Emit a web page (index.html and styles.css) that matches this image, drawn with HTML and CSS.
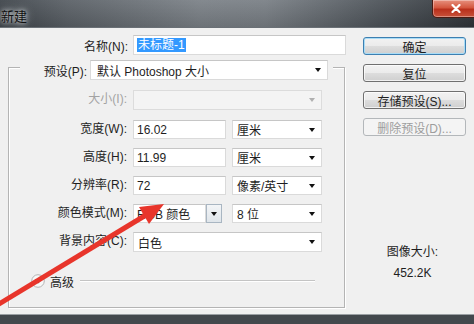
FILE: index.html
```html
<!DOCTYPE html>
<html lang="zh-CN">
<head>
<meta charset="UTF-8">
<title>新建</title>
<link rel="stylesheet" href="styles.css">
</head>
<body>
<div class="window">
  <div class="titlebar">
    <span class="title">新建</span>
    <span class="close">
      <svg width="10" height="9" viewBox="0 0 10 9"><path d="M1.5 1 L8.5 8 M8.5 1 L1.5 8" stroke="#fff" stroke-width="2.2" stroke-linecap="round"/></svg>
    </span>
  </div>

  <div class="client">
    <div class="form">
      <div class="name-row">
        <label>名称(N):</label>
        <div class="field"><span class="sel">未标题-1</span></div>
      </div>

      <div class="frame">
        <div class="preset-row">
          <label>预设(P):</label>
          <div class="field drop preset">默认 Photoshop 大小<i class="arrow"></i></div>
        </div>

        <div class="grid">
          <label class="off">大小(I):</label>
          <div class="field drop wide off"><i class="arrow"></i></div>

          <label>宽度(W):</label>
          <div class="field">16.02</div>
          <div class="field drop">厘米<i class="arrow"></i></div>

          <label>高度(H):</label>
          <div class="field">11.99</div>
          <div class="field drop">厘米<i class="arrow"></i></div>

          <label>分辨率(R):</label>
          <div class="field">72</div>
          <div class="field drop">像素/英寸<i class="arrow"></i></div>

          <label>颜色模式(M):</label>
          <div class="combo">
            <div class="field">RGB 颜色</div>
            <div class="combo-btn"><i class="arrow"></i></div>
          </div>
          <div class="field drop">8 位<i class="arrow"></i></div>

          <label>背景内容(C):</label>
          <div class="field drop wide">白色<i class="arrow"></i></div>
        </div>

        <div class="advanced">
          <svg width="14" height="14" viewBox="0 0 14 14">
            <circle cx="7" cy="7" r="6.3" fill="#f7f7f7" stroke="#b4b4b4"/>
            <path d="M4.2 5.6 L7 8.4 L9.8 5.6" fill="none" stroke="#222" stroke-width="1.6"/>
          </svg>
          <span class="adv-text">高级</span>
          <span class="groove"></span>
        </div>
      </div>
    </div>

    <div class="side">
      <div class="btn default">确定</div>
      <div class="btn">复位</div>
      <div class="btn">存储预设(S)...</div>
      <div class="btn off">删除预设(D)...</div>
      <div class="info">
        <div>图像大小:</div>
        <div class="size">452.2K</div>
      </div>
    </div>
  </div>

  <div class="bottom"></div>

  <!-- red annotation arrow drawn over the dialog -->
  <svg class="annot" width="474" height="324" viewBox="0 0 474 324">
    <line x1="-6" y1="307" x2="146" y2="215" stroke="#e8352b" stroke-width="5"/>
    <polygon points="164,204 149,224 139,207" fill="#e8352b"/>
  </svg>
</div>
</body>
</html>
```

FILE: styles.css
```css
body { margin:0; width:474px; height:324px; overflow:hidden; font-family:"Liberation Sans","Noto Sans CJK SC",sans-serif; font-size:12px; color:#1e1e1e; }
.window { position:relative; width:474px; height:324px; display:flex; flex-direction:column; background:#f0f0f0; }

.titlebar { height:27px; flex:none; display:flex; align-items:flex-start; border-bottom:1px solid #6a7076; background:linear-gradient(rgba(255,255,255,0.06),rgba(0,0,0,0.12)),linear-gradient(90deg,#3f454b 0%,#5b6167 14%,#7c8288 42%,#7a8086 56%,#4f555b 80%,#30353a 100%); }
.title { margin:6px 0 0 1px; font-size:13px; color:#111; text-shadow:0 0 4px #d8dcdf,0 0 8px #c9cdd1; }
.close { margin-left:auto; margin-right:-6px; width:48px; height:18px; box-sizing:border-box; display:flex; align-items:center; justify-content:center; border:1px solid #4a1a12; border-top:none; border-radius:0 0 0 5px; background:linear-gradient(#e7907e 0%,#d4573f 45%,#b9301c 55%,#c8523a 100%); box-shadow:inset 0 0 0 1px rgba(255,255,255,0.35); }

.client { height:286px; flex:none; box-sizing:border-box; display:flex; padding:7px 0 0 8px; }
.form { width:338px; }

label { text-align:right; white-space:nowrap; }
label.off { color:#a3a3a3; }

.field { height:19px; box-sizing:border-box; display:flex; align-items:center; padding-left:3px; background:#fff; border:1px solid #dadada; border-top-color:#c6c6c6; white-space:nowrap; }
.field.off { background:#f4f4f4; border-color:#dcdcdc; }
.drop { padding-left:4px; }
.arrow { margin-left:auto; margin-right:6px; width:0; height:0; border-left:3.5px solid transparent; border-right:3.5px solid transparent; border-top:4px solid #111; }
.off .arrow { border-top-color:#b0b0b0; }
.wide { grid-column:2 / 4; height:20px; }

.name-row { display:grid; grid-template-columns:120px 213px; column-gap:5px; align-items:center; height:20px; }
.name-row .field { height:20px; }
.sel { background:#3399ff; color:#fff; padding:0 1px; line-height:14px; }

.frame { margin-top:12px; width:337px; height:241px; box-sizing:border-box; border:1px solid #b4b4b4; box-shadow:1px 1px 0 #fff, inset 1px 1px 0 #fff; }

.preset-row { margin:-8px 0 0 11px; width:313px; height:20px; display:grid; grid-template-columns:67px 238px; column-gap:3px; align-items:center; background:#f0f0f0; }
.preset { height:20px; padding-left:6px; }

.grid { margin-top:10px; display:grid; grid-template-columns:118px 93px 90px; grid-template-rows:21px repeat(5,19px); column-gap:6px; row-gap:9px; align-items:start; }
.grid label { line-height:19px; }

.combo { display:flex; width:89px; }
.combo .field { flex:1; }
.combo-btn { width:16px; height:19px; box-sizing:border-box; display:flex; align-items:center; border:1px solid #a9b6c2; background:linear-gradient(#f3f5f7,#dfe5ea); }
.combo-btn .arrow { margin:0 auto; }

.advanced { margin:23px 0 0 22px; height:14px; display:flex; align-items:center; }
.adv-text { margin-left:5px; }
.groove { margin-left:6px; width:235px; height:0; border-top:1px solid #c4c4c4; border-bottom:1px solid #fff; }

.side { margin-left:17px; width:103px; display:flex; flex-direction:column; gap:9px; padding-top:2px; }
.btn { height:18px; box-sizing:border-box; display:flex; align-items:center; justify-content:center; border:1px solid #707070; border-radius:3px; background:linear-gradient(#f2f2f2 0%,#ebebeb 50%,#dddddd 51%,#cfcfcf 100%); box-shadow:inset 0 0 0 1px rgba(255,255,255,0.7); white-space:nowrap; }
.btn.default { border-color:#3c7fb1; box-shadow:inset 0 0 0 1px #a9dcf6; }
.btn.off { border-color:#b3b7ba; background:#f4f4f4; color:#9d9d9d; box-shadow:none; }
.info { margin-top:99px; padding-right:4px; text-align:center; line-height:16px; }
.size { margin-top:5px; }

.bottom { height:10px; flex:none; box-sizing:border-box; background:#43484d; border-top:1px solid #9a9fa3; }

.annot { position:absolute; left:0; top:0; pointer-events:none; }
```
